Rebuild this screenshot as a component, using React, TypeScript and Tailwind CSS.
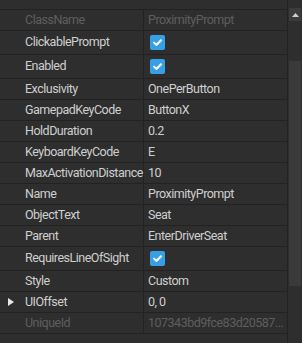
import React from "react";

type Row = {
  name: string;
  value?: string;
  check?: boolean;
  dim?: boolean;
  arrow?: boolean;
};

const rows: Row[] = [
  { name: "ClassName", value: "ProximityPrompt", dim: true },
  { name: "ClickablePrompt", check: true },
  { name: "Enabled", check: true },
  { name: "Exclusivity", value: "OnePerButton" },
  { name: "GamepadKeyCode", value: "ButtonX" },
  { name: "HoldDuration", value: "0.2" },
  { name: "KeyboardKeyCode", value: "E" },
  { name: "MaxActivationDistance", value: "10" },
  { name: "Name", value: "ProximityPrompt" },
  { name: "ObjectText", value: "Seat" },
  { name: "Parent", value: "EnterDriverSeat" },
  { name: "RequiresLineOfSight", check: true },
  { name: "Style", value: "Custom" },
  { name: "UIOffset", value: "0, 0", arrow: true },
  { name: "UniqueId", value: "107343bd9fce83d20587...", dim: true },
];

function Check() {
  return (
    <div className="w-[15px] h-[15px] rounded-[2px] bg-[#35a0e6] flex items-center justify-center">
      <svg width="11" height="11" viewBox="0 0 11 11">
        <path d="M2 5.6 L4.5 8 L9 3.2" fill="none" stroke="white" strokeWidth="2" strokeLinecap="round" strokeLinejoin="round" />
      </svg>
    </div>
  );
}

export default function App() {
  return (
    <div
      className="w-[302px] h-[343px] bg-[#2e2e2e] flex overflow-hidden text-[12.5px] tracking-[-0.5px] text-[#cfcfcf]"
      style={{ fontFamily: "Roboto, 'Noto Sans', sans-serif" }}
    >
      <div className="flex-1 flex flex-col">
        <div className="h-[10px] border-b border-[#222222]" />
        {rows.map((r) => (
          <div
            key={r.name}
            className={`flex border-b border-[#222222] ${r.check ? "h-[24px]" : "h-[21px]"}`}
          >
            <div className={`w-[144px] shrink-0 flex items-center pl-[25px] relative border-r border-[#222222] ${r.dim ? "text-[#5e5e5e]" : ""}`}>
              {r.arrow && (
                <svg className="absolute left-[8px]" width="6" height="8" viewBox="0 0 6 8">
                  <path d="M0 0 L6 4 L0 8 Z" fill="#e8e8e8" />
                </svg>
              )}
              {r.name}
            </div>
            <div className={`flex-1 flex items-center pl-[4px] ${r.dim ? "text-[#5e5e5e]" : ""}`}>
              {r.check ? <div className="ml-[2px]"><Check /></div> : r.value}
            </div>
          </div>
        ))}
      </div>
      <div className="w-[15px] shrink-0 flex flex-col border-l border-[#222222] bg-[#2e2e2e]">
        <div className="h-[8px]" />
        <div className="h-[13px] mx-[1px] bg-[#3c3c3c] flex items-center justify-center">
          <svg width="7" height="4" viewBox="0 0 7 4">
            <path d="M0 4 L3.5 0 L7 4 Z" fill="#cfcfcf" />
          </svg>
        </div>
        <div className="h-[40px]" />
        <div className="h-[225px] mx-[1px] bg-[#3a3a3a]" />
      </div>
    </div>
  );
}
